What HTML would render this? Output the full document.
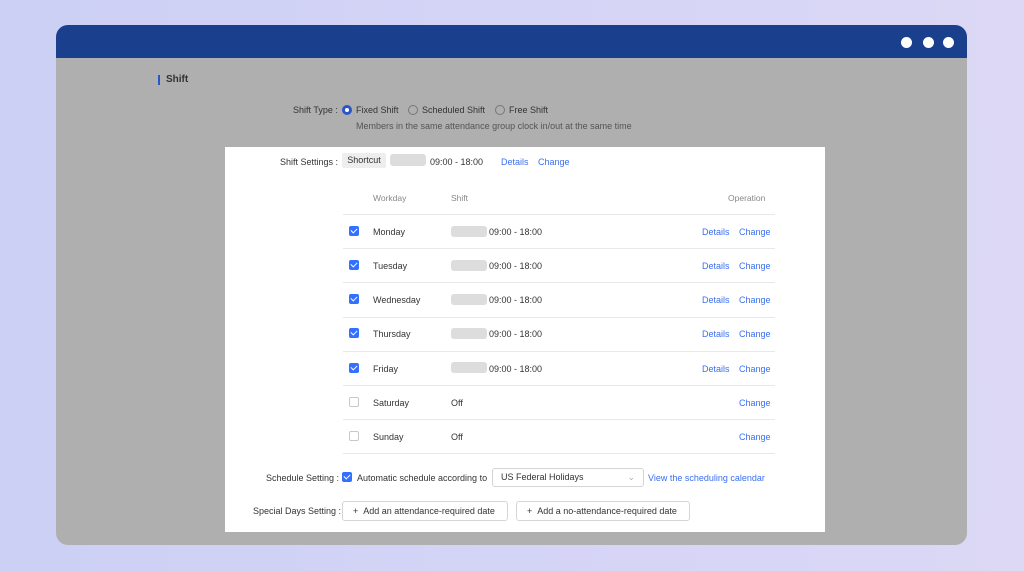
<!DOCTYPE html>
<html><head><style>
*{margin:0;padding:0;box-sizing:border-box}
body{width:1024px;height:571px;overflow:hidden;background:linear-gradient(90deg,#ccd0f5,#dcd8f6);font-family:"Liberation Sans",sans-serif;font-size:9px;color:#333;position:relative}
.win{position:absolute;left:56px;top:25px;width:911px;height:520px;border-radius:12px;overflow:hidden;background:#afafaf}
.hdr{height:33px;background:#1a3f8c;position:relative}
.dot{position:absolute;top:12px;width:11px;height:11px;border-radius:50%;background:#fff}
.a{position:absolute;white-space:nowrap;margin-top:1px}
.panel{position:absolute;left:225px;top:147px;width:600px;height:385px;background:#fff}
.blue{color:#3a6ff0}
.cb{position:absolute;width:10px;height:10px;border-radius:2px;background:#3370ff}
.cb:after{content:"";position:absolute;left:3px;top:1px;width:3px;height:5px;border:solid #fff;border-width:0 1.5px 1.5px 0;transform:rotate(45deg)}
.cbo{position:absolute;width:10px;height:10px;border-radius:2px;border:1px solid #c8c8c8;background:#fff}
.pill{position:absolute;width:36px;height:11px;border-radius:3px;background:#ddd}
.line{position:absolute;left:343px;width:432px;height:1px;background:#e8e8e8}
.btn{position:absolute;height:20px;border:1px solid #d5d5d5;border-radius:3px;background:#fff;padding:0 10px;line-height:18px;color:#333}
.radio{position:absolute;width:10px;height:10px;border-radius:50%;border:1px solid #777}
</style></head><body>
<div class="win">
<div class="hdr"><div class="dot" style="left:845px"></div><div class="dot" style="left:867px"></div><div class="dot" style="left:887px"></div></div>
</div>
<div class="a" style="left:158px;top:74px;width:2px;height:10px;background:#2a55c8"></div>
<div class="a" style="left:166px;top:73px;font-size:10px;font-weight:bold;color:#333">Shift</div>
<div class="a" style="left:293px;top:104px;color:#333">Shift Type :</div>
<div class="radio" style="left:342px;top:105px;border:3px solid #2a55c8;background:#fff"></div>
<div class="a" style="left:356px;top:104px">Fixed Shift</div>
<div class="radio" style="left:408px;top:105px"></div>
<div class="a" style="left:422px;top:104px">Scheduled Shift</div>
<div class="radio" style="left:495px;top:105px"></div>
<div class="a" style="left:509px;top:104px">Free Shift</div>
<div class="a" style="left:356px;top:120px;font-size:9px;color:#555">Members in the same attendance group clock in/out at the same time</div>
<div class="panel"></div>
<div class="a" style="left:280px;top:156px">Shift Settings :</div>
<div class="a" style="left:342px;top:152px;width:44px;height:15px;background:#eee;border-radius:2px;line-height:15px;text-align:center">Shortcut</div>
<div class="pill" style="left:390px;top:154px;height:12px"></div>
<div class="a" style="left:430px;top:156px">09:00 - 18:00</div>
<div class="a blue" style="left:501px;top:156px">Details</div>
<div class="a blue" style="left:538px;top:156px">Change</div>
<div class="a" style="left:373px;top:192px;color:#888;font-size:8.5px">Workday</div>
<div class="a" style="left:451px;top:192px;color:#888;font-size:8.5px">Shift</div>
<div class="a" style="left:728px;top:192px;color:#888;font-size:8.5px">Operation</div>
<div class="line" style="top:214px"></div>
<div class="cb" style="left:349px;top:226px"></div><div class="a" style="left:373px;top:226px">Monday</div><div class="pill" style="left:451px;top:226px"></div><div class="a" style="left:489px;top:226px">09:00 - 18:00</div><div class="a blue" style="left:702px;top:226px">Details</div><div class="a blue" style="left:739px;top:226px">Change</div>
<div class="line" style="top:248px"></div>
<div class="cb" style="left:349px;top:260px"></div><div class="a" style="left:373px;top:260px">Tuesday</div><div class="pill" style="left:451px;top:260px"></div><div class="a" style="left:489px;top:260px">09:00 - 18:00</div><div class="a blue" style="left:702px;top:260px">Details</div><div class="a blue" style="left:739px;top:260px">Change</div>
<div class="line" style="top:282px"></div>
<div class="cb" style="left:349px;top:294px"></div><div class="a" style="left:373px;top:294px">Wednesday</div><div class="pill" style="left:451px;top:294px"></div><div class="a" style="left:489px;top:294px">09:00 - 18:00</div><div class="a blue" style="left:702px;top:294px">Details</div><div class="a blue" style="left:739px;top:294px">Change</div>
<div class="line" style="top:317px"></div>
<div class="cb" style="left:349px;top:328px"></div><div class="a" style="left:373px;top:328px">Thursday</div><div class="pill" style="left:451px;top:328px"></div><div class="a" style="left:489px;top:328px">09:00 - 18:00</div><div class="a blue" style="left:702px;top:328px">Details</div><div class="a blue" style="left:739px;top:328px">Change</div>
<div class="line" style="top:351px"></div>
<div class="cb" style="left:349px;top:363px"></div><div class="a" style="left:373px;top:363px">Friday</div><div class="pill" style="left:451px;top:362px"></div><div class="a" style="left:489px;top:363px">09:00 - 18:00</div><div class="a blue" style="left:702px;top:363px">Details</div><div class="a blue" style="left:739px;top:363px">Change</div>
<div class="line" style="top:385px"></div>
<div class="cbo" style="left:349px;top:397px"></div><div class="a" style="left:373px;top:397px">Saturday</div><div class="a" style="left:451px;top:397px">Off</div><div class="a blue" style="left:739px;top:397px">Change</div>
<div class="line" style="top:419px"></div>
<div class="cbo" style="left:349px;top:431px"></div><div class="a" style="left:373px;top:431px">Sunday</div><div class="a" style="left:451px;top:431px">Off</div><div class="a blue" style="left:739px;top:431px">Change</div>
<div class="line" style="top:453px"></div>
<div class="a" style="left:266px;top:472px">Schedule Setting :</div>
<div class="cb" style="left:342px;top:472px"></div>
<div class="a" style="left:357px;top:472px">Automatic schedule according to</div>
<div class="a" style="left:492px;top:467px;width:152px;height:19px;border:1px solid #d5d5d5;border-radius:3px;padding-left:8px;line-height:17px">US Federal Holidays<span style="position:absolute;right:8px;color:#aaa">&#8964;</span></div>
<div class="a blue" style="left:648px;top:472px">View the scheduling calendar</div>
<div class="a" style="left:253px;top:505px">Special Days Setting :</div>
<div class="btn" style="left:342px;top:501px;width:166px">+ &nbsp;Add an attendance-required date</div>
<div class="btn" style="left:516px;top:501px;width:174px">+ &nbsp;Add a no-attendance-required date</div>
</body></html>
